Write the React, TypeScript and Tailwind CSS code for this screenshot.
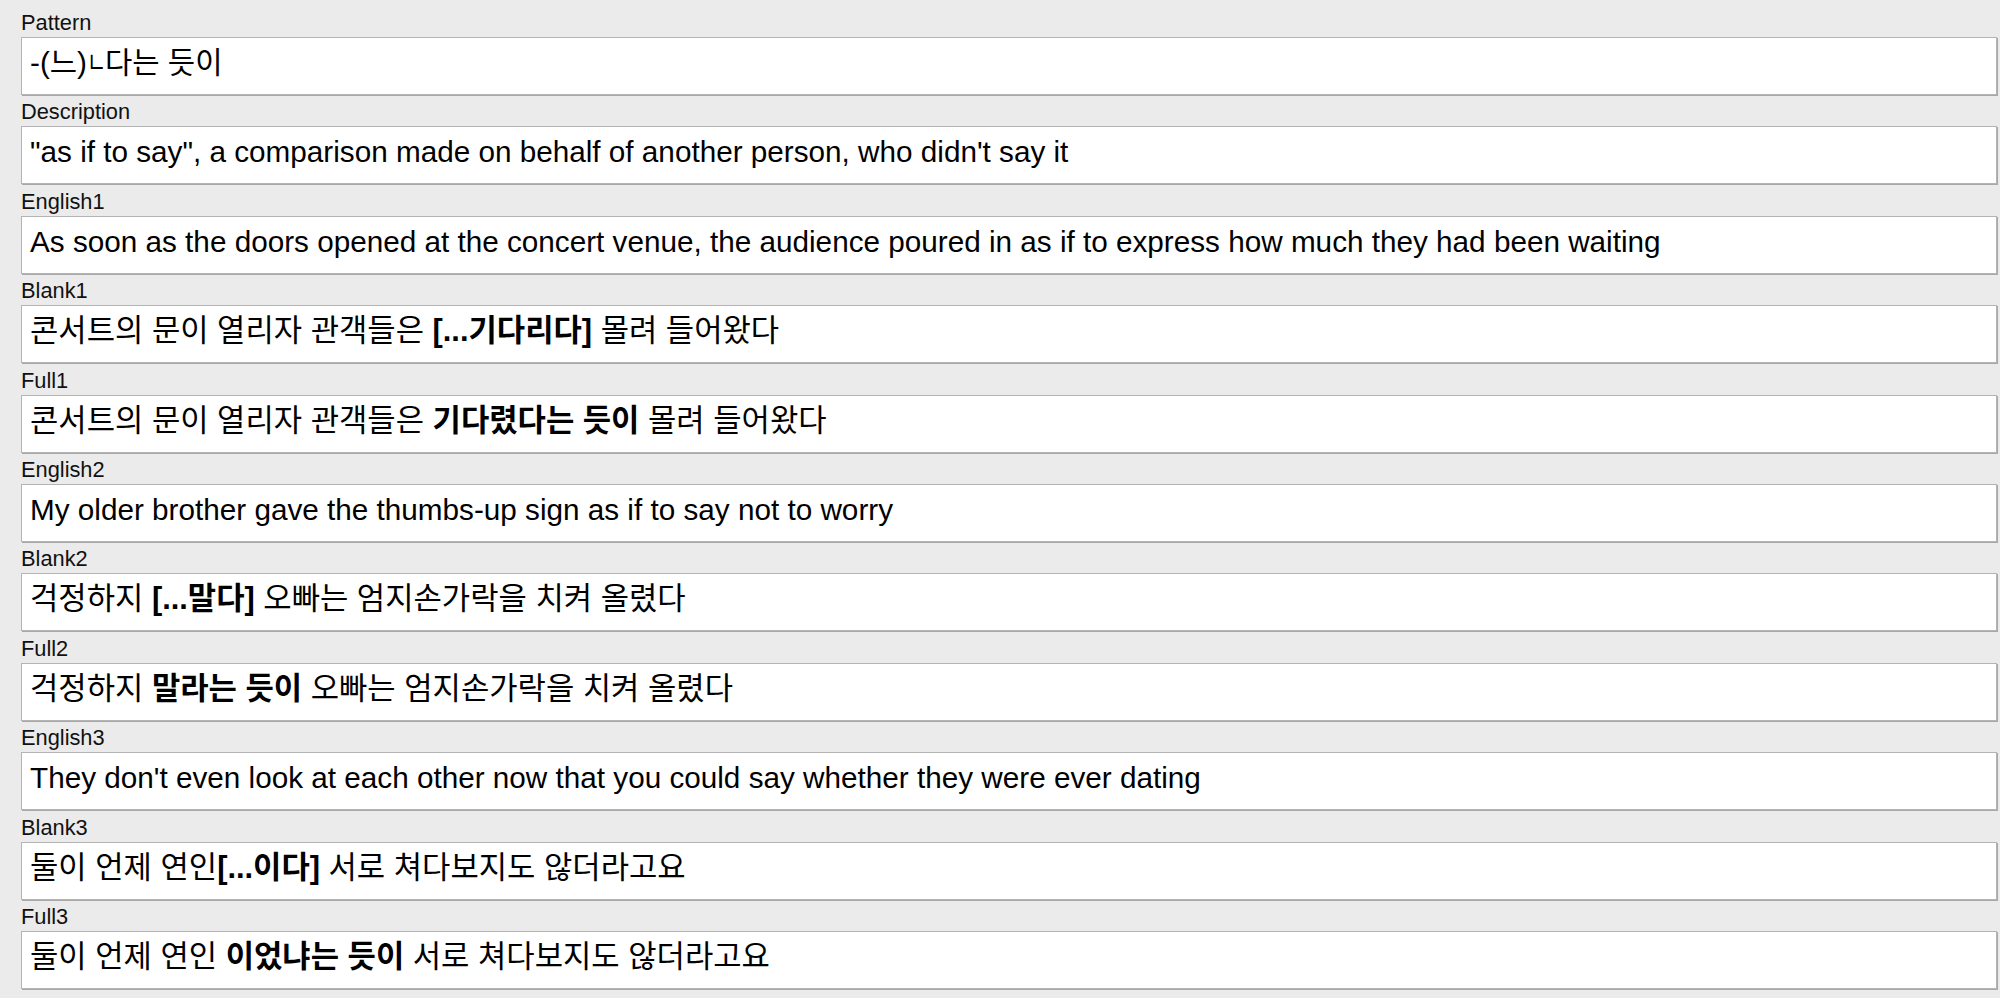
import React from 'react'

type Part = { t: string; b?: boolean; tight?: boolean }

const rows: { label: string; ko?: boolean; parts: Part[] }[] = [
  { label: 'Pattern', parts: [{ t: '-(느)' }, { t: 'ㄴ', tight: true }, { t: '다는 듯이' }] },
  { label: 'Description', parts: [{ t: '"as if to say", a comparison made on behalf of another person, who didn\'t say it' }] },
  { label: 'English1', parts: [{ t: 'As soon as the doors opened at the concert venue, the audience poured in as if to express how much they had been waiting' }] },
  { label: 'Blank1', ko: true, parts: [{ t: '콘서트의 문이 열리자 관객들은 ' }, { t: '[...기다리다]', b: true }, { t: ' 몰려 들어왔다' }] },
  { label: 'Full1', ko: true, parts: [{ t: '콘서트의 문이 열리자 관객들은 ' }, { t: '기다렸다는 듯이', b: true }, { t: ' 몰려 들어왔다' }] },
  { label: 'English2', parts: [{ t: 'My older brother gave the thumbs-up sign as if to say not to worry' }] },
  { label: 'Blank2', ko: true, parts: [{ t: '걱정하지 ' }, { t: '[...말다]', b: true }, { t: ' 오빠는 엄지손가락을 치켜 올렸다' }] },
  { label: 'Full2', ko: true, parts: [{ t: '걱정하지 ' }, { t: '말라는 듯이', b: true }, { t: ' 오빠는 엄지손가락을 치켜 올렸다' }] },
  { label: 'English3', parts: [{ t: "They don't even look at each other now that you could say whether they were ever dating" }] },
  { label: 'Blank3', ko: true, parts: [{ t: '둘이 언제 연인' }, { t: '[...이다]', b: true }, { t: ' 서로 쳐다보지도 않더라고요' }] },
  { label: 'Full3', ko: true, parts: [{ t: '둘이 언제 연인 ' }, { t: '이었냐는 듯이', b: true }, { t: ' 서로 쳐다보지도 않더라고요' }] },
]

function Field({ label, ko, parts }: { label: string; ko?: boolean; parts: Part[] }) {
  return (
    <div className="mb-[5.4px]">
      <div className="text-[21.8px] leading-[24px] mb-[2px] text-[#111]">{label}</div>
      <div
        className={`h-[58px] bg-white border border-[#b4b4b4] shadow-[1px_1px_0_#a8a8a8] flex items-center pl-[8px] pb-[6px] text-black overflow-hidden ${
          ko ? 'text-[30.8px]' : 'text-[29.7px]'
        }`}
      >
        <div className="whitespace-pre leading-[34px]">
          {parts.map((p, i) =>
            p.tight ? (
              <span key={i} className="inline-block w-[18px] align-baseline">
                <span className="inline-block scale-x-[0.7] origin-left">{p.t}</span>
              </span>
            ) : (
              <span key={i} className={p.b ? 'font-bold' : ''}>
                {p.t}
              </span>
            )
          )}
        </div>
      </div>
    </div>
  )
}

export default function App() {
  return (
    <div
      className="min-h-[998px] bg-[#ebebeb] pt-[11px] pl-[21px] pr-[3px]"
      style={{ fontFamily: '"Liberation Sans", "Noto Sans CJK KR", sans-serif' }}
    >
      {rows.map((r) => (
        <Field key={r.label} label={r.label} ko={r.ko} parts={r.parts} />
      ))}
    </div>
  )
}
